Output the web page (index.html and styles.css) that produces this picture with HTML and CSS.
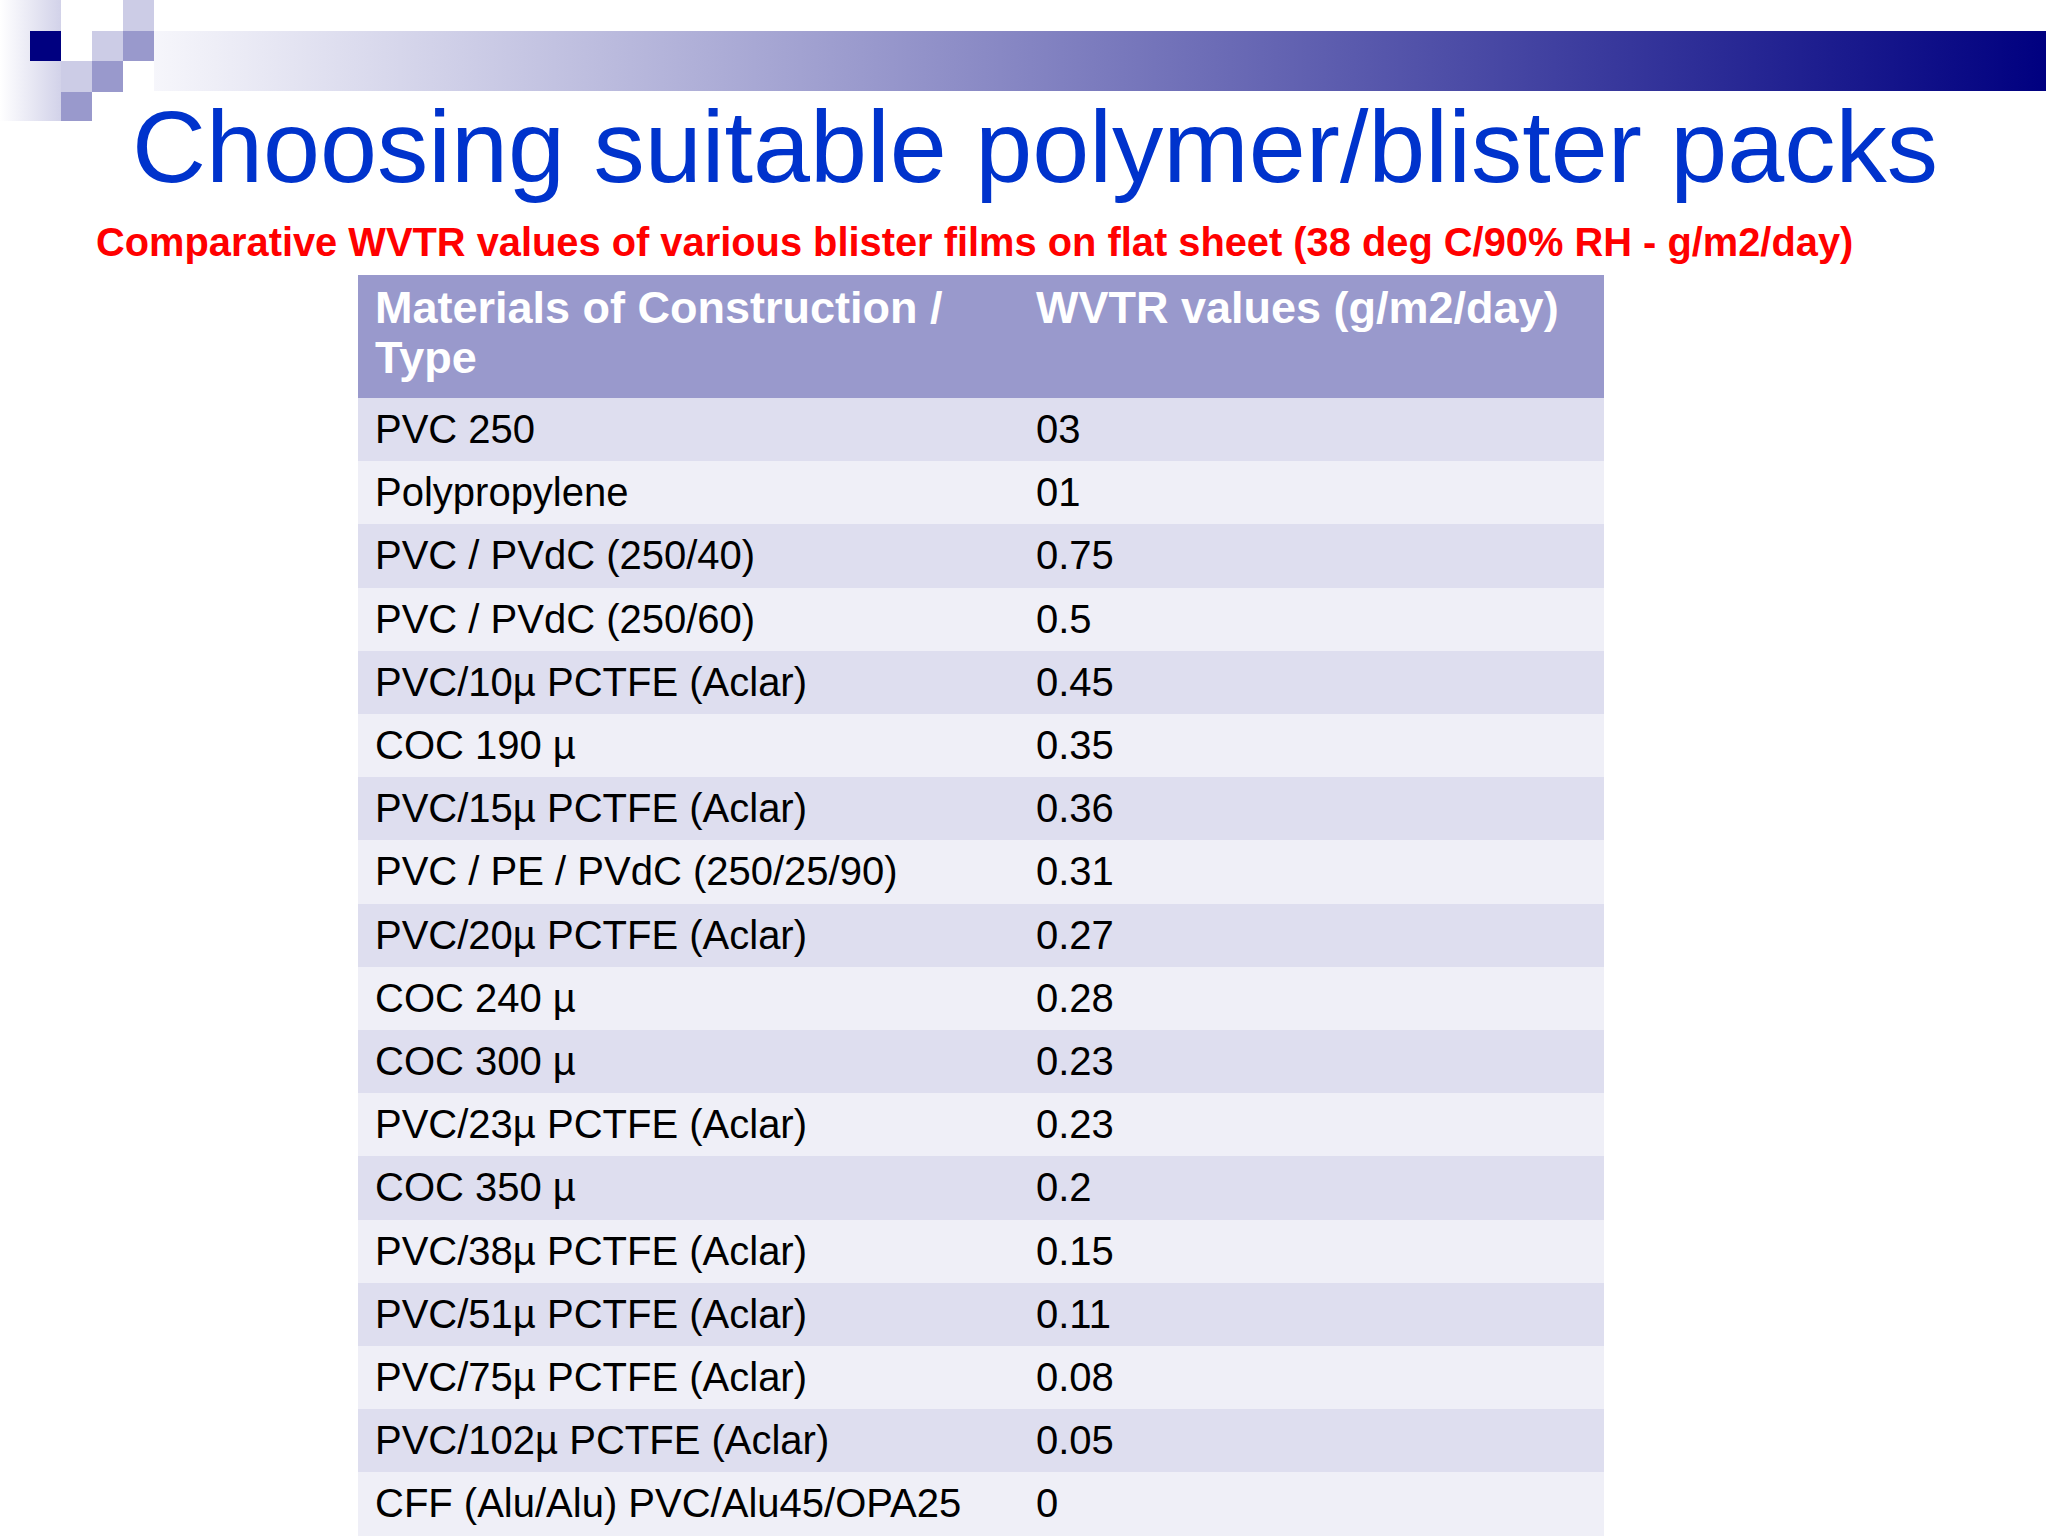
FILE: index.html
```html
<!DOCTYPE html>
<html lang="en">
<head>
<meta charset="utf-8">
<title>Choosing suitable polymer/blister packs</title>
<link rel="stylesheet" href="styles.css">
</head>
<body>
<div class="slide">
  <header class="banner">
    <div class="logo">
      <span class="sq light c5 r1"></span>
      <span class="sq dark c2 r2"></span>
      <span class="sq light c4 r2"></span>
      <span class="sq mid c5 r2"></span>
      <span class="sq light c3 r3"></span>
      <span class="sq mid c4 r3"></span>
      <span class="sq mid c3 r4"></span>
    </div>
    <div class="bar"></div>
  </header>
  <h1 class="title">Choosing suitable polymer/blister packs</h1>
  <p class="subtitle">Comparative WVTR values of various blister films on flat sheet (38 deg C/90% RH - g/m2/day)</p>
  <table class="wvtr">
    <colgroup><col class="col-mat"><col class="col-val"></colgroup>
    <thead>
      <tr><th>Materials of Construction / Type</th><th>WVTR values (g/m2/day)</th></tr>
    </thead>
    <tbody>
      <tr><td>PVC 250</td><td>03</td></tr>
      <tr><td>Polypropylene</td><td>01</td></tr>
      <tr><td>PVC / PVdC (250/40)</td><td>0.75</td></tr>
      <tr><td>PVC / PVdC (250/60)</td><td>0.5</td></tr>
      <tr><td>PVC/10µ PCTFE (Aclar)</td><td>0.45</td></tr>
      <tr><td>COC 190 µ</td><td>0.35</td></tr>
      <tr><td>PVC/15µ PCTFE (Aclar)</td><td>0.36</td></tr>
      <tr><td>PVC / PE / PVdC (250/25/90)</td><td>0.31</td></tr>
      <tr><td>PVC/20µ PCTFE (Aclar)</td><td>0.27</td></tr>
      <tr><td>COC 240 µ</td><td>0.28</td></tr>
      <tr><td>COC 300 µ</td><td>0.23</td></tr>
      <tr><td>PVC/23µ PCTFE (Aclar)</td><td>0.23</td></tr>
      <tr><td>COC 350 µ</td><td>0.2</td></tr>
      <tr><td>PVC/38µ PCTFE (Aclar)</td><td>0.15</td></tr>
      <tr><td>PVC/51µ PCTFE (Aclar)</td><td>0.11</td></tr>
      <tr><td>PVC/75µ PCTFE (Aclar)</td><td>0.08</td></tr>
      <tr><td>PVC/102µ PCTFE (Aclar)</td><td>0.05</td></tr>
      <tr><td>CFF (Alu/Alu) PVC/Alu45/OPA25</td><td>0</td></tr>
    </tbody>
  </table>
</div>
</body>
</html>
```
FILE: styles.css
```css
html, body {
  margin: 0;
  padding: 0;
  background: #ffffff;
  overflow: hidden;
}

.slide {
  width: 2048px;
  height: 1536px;
  font-family: "Liberation Sans", Arial, sans-serif;
  overflow: hidden;
}

/* top decoration */
.banner {
  display: flex;
  align-items: flex-start;
  height: 121px;
}

.logo {
  flex: none;
  width: 154px;
  height: 121px;
  display: grid;
  grid-template-columns: 30px 31px 31px 31px 31px;
  grid-template-rows: 31px 30px 31px 29px;
  background: linear-gradient(to right, #ffffff 0%, #d2d2e9 100%) no-repeat 0 0 / 61px 121px;
}

.sq { display: block; }
.sq.dark { background: #000080; }
.sq.mid { background: #9999cc; }
.sq.light { background: #ccccE6; }
.c2 { grid-column: 2; }
.c3 { grid-column: 3; }
.c4 { grid-column: 4; }
.c5 { grid-column: 5; }
.r1 { grid-row: 1; }
.r2 { grid-row: 2; }
.r3 { grid-row: 3; }
.r4 { grid-row: 4; }

.bar {
  flex: 1;
  margin-top: 31px;
  margin-right: 2px;
  height: 60px;
  background: linear-gradient(to right, #f6f6fb 0%, #000080 100%);
}

/* headings */
.title {
  margin: -33px 0 0 132px;
  font-size: 102.5px;
  line-height: 117px;
  font-weight: normal;
  color: #0033cc;
  white-space: nowrap;
}

.subtitle {
  margin: 14px 0 0 96px;
  font-size: 39.85px;
  line-height: 46px;
  font-weight: bold;
  color: #ff0000;
  white-space: nowrap;
}

/* table */
.wvtr {
  margin: 10px 0 0 358px;
  width: 1246px;
  border-collapse: collapse;
  table-layout: fixed;
}

.col-mat { width: 661px; }
.col-val { width: 585px; }

.wvtr th {
  background: #9999cc;
  color: #ffffff;
  font-size: 45px;
  line-height: 50px;
  font-weight: bold;
  text-align: left;
  vertical-align: top;
  padding: 7.5px 17px 15.5px;
}

.wvtr td {
  height: 63.2px;
  padding: 0 17px;
  font-size: 40px;
  line-height: 63.2px;
  color: #000000;
  white-space: nowrap;
  box-sizing: border-box;
}

.wvtr tbody tr:nth-child(odd) td { background: #dedeef; }
.wvtr tbody tr:nth-child(even) td { background: #efeff7; }
```
